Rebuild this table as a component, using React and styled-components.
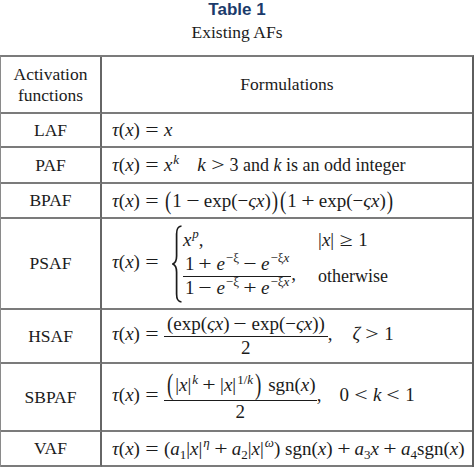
import React from "react";
import styled, { createGlobalStyle } from "styled-components";

const GlobalStyle = createGlobalStyle`
  html, body {
    margin: 0;
    padding: 0;
    background: #fff;
  }
  body {
    font-family: "Liberation Serif", "Times New Roman", serif;
    color: #1b1b1b;
  }
`;

const Page = styled.div`
  width: 474px;
  height: 468px;
  overflow: hidden;
`;

const Caption = styled.header`
  display: flex;
  flex-direction: column;
  align-items: center;
  height: 55px;
`;

const Title = styled.h1`
  margin: 0;
  font-family: "Liberation Sans", Arial, sans-serif;
  font-weight: 700;
  font-size: 17px;
  line-height: 20px;
  color: #1b3b6b;
`;

const Subtitle = styled.div`
  margin-top: 2px;
  font-size: 17.5px;
  line-height: 20px;
`;

const Grid = styled.div`
  display: grid;
  grid-template-columns: 101px 1fr;
  grid-template-rows: 57px 34px 36px 35px 91px 54px 68px 35px;
  border-top: 2px solid #7b7b7b;
  border-left: 1px solid #8a8a8a;
  border-right: 2px solid #5e5e5e;
`;

const Cell = styled.div`
  box-sizing: border-box;
  border-bottom: 2px solid #7b7b7b;
  display: flex;
  align-items: center;
  font-size: 17.5px;
  line-height: 20.5px;
  white-space: nowrap;
`;

const LabelCell = styled(Cell)`
  justify-content: center;
  text-align: center;
  border-right: 2px solid #666;
`;

const FormulaCell = styled(Cell)`
  justify-content: ${(p) => (p.$center ? "center" : "flex-start")};
  padding-left: ${(p) => (p.$center ? 0 : 10)}px;
`;

const Formula = styled.span`
  font-size: 19px;
  line-height: 20px;
  white-space: nowrap;
`;

const Words = styled.span`
  font-size: 18px;
`;

const V = styled.i`
  font-style: italic;
`;

const Op = styled.span`
  display: inline-block;
  width: 14px;
  text-align: center;
  transform: scaleX(1.25);
  margin: 0 ${(p) => p.$m ?? 4}px;
`;

const Sup = styled.span`
  font-size: 13px;
  vertical-align: 0.55em;
  line-height: 0;
  margin-left: ${(p) => p.$ml ?? 1}px;
`;

const Sub = styled.span`
  font-size: 13px;
  vertical-align: -0.3em;
  line-height: 0;
`;

const Big = styled.span`
  display: inline-block;
  transform: scaleY(${(p) => p.$s || 1.3});
  line-height: 0;
  margin: 0 ${(p) => p.$m ?? 1}px;
`;

const Quad = styled.span`
  display: inline-block;
  width: ${(p) => p.$w || 18}px;
`;

const Frac = styled.span`
  display: inline-flex;
  flex-direction: column;
  align-items: center;
  vertical-align: middle;
  margin: 0 ${(p) => p.$m ?? 0}px;
`;

const Num = styled.span`
  padding: 0 ${(p) => p.$px ?? 1}px 2px;
  line-height: ${(p) => p.$lh || 20}px;
`;

const Den = styled.span`
  align-self: stretch;
  text-align: center;
  border-top: 1.3px solid #1b1b1b;
  padding: 1px 2px 0;
  line-height: 20px;
`;

const Cases = styled.span`
  display: inline-grid;
  grid-template-columns: auto auto;
  column-gap: 22px;
  row-gap: 4px;
  align-items: center;
  vertical-align: middle;
`;

const BraceSvg = styled.svg`
  vertical-align: middle;
  margin: 0 1px 0 8px;
`;

const Brace = () => (
  <BraceSvg width="10" height="78" viewBox="0 0 10 78">
    <path
      d="M9.5,1 C5.5,1.5 4.6,4 4.6,9 L4.6,31 C4.6,36 3.2,38 0.8,39 C3.2,40 4.6,42 4.6,47 L4.6,69 C4.6,74 5.5,76.5 9.5,77"
      fill="none"
      stroke="#1b1b1b"
      strokeWidth="1.7"
    />
  </BraceSvg>
);

const Rel = ({ children }) => <Op $m={5}>{children}</Op>;
const Bin = ({ children }) => <Op $m={4}>{children}</Op>;

const Lhs = () => (
  <>
    <V>τ</V>(<V>x</V>)<Rel>=</Rel>
  </>
);

const rows = [
  {
    label: "LAF",
    formula: (
      <Formula>
        <Lhs />
        <V>x</V>
      </Formula>
    ),
  },
  {
    label: "PAF",
    formula: (
      <Formula>
        <Lhs />
        <V>x</V>
        <Sup>
          <V>k</V>
        </Sup>
        <Quad $w={18} />
        <V>k</V>
        <Rel>&gt;</Rel>
        <Words>
          3 and <V>k</V> is an odd integer
        </Words>
      </Formula>
    ),
  },
  {
    label: "BPAF",
    formula: (
      <Formula>
        <Lhs />
        <Big>(</Big>1<Bin>−</Bin>exp(−<V>ςx</V>)<Big>)</Big>
        <Big>(</Big>1<Bin>+</Bin>exp(−<V>ςx</V>)<Big>)</Big>
      </Formula>
    ),
  },
  {
    label: "PSAF",
    formula: (
      <Formula>
        <Lhs />
        <Brace />
        <Cases>
          <span>
            <V>x</V>
            <Sup>
              <V>p</V>
            </Sup>
            ,
          </span>
          <span>
            |<V>x</V>|<Rel>≥</Rel>1
          </span>
          <span>
            <Frac>
              <Num $px={2}>
                1<Bin>+</Bin>
                <V>e</V>
                <Sup>−ξ</Sup>
                <Bin>−</Bin>
                <V>e</V>
                <Sup>
                  −ξ<V>x</V>
                </Sup>
              </Num>
              <Den>
                1<Bin>−</Bin>
                <V>e</V>
                <Sup>−ξ</Sup>
                <Bin>+</Bin>
                <V>e</V>
                <Sup>
                  −ξ<V>x</V>
                </Sup>
              </Den>
            </Frac>
            ,
          </span>
          <Words>otherwise</Words>
        </Cases>
      </Formula>
    ),
  },
  {
    label: "HSAF",
    formula: (
      <Formula>
        <Lhs />
        <Frac>
          <Num $px={3}>
            (exp(<V>ςx</V>)<Bin>−</Bin>exp(−<V>ςx</V>))
          </Num>
          <Den>2</Den>
        </Frac>
        ,<Quad $w={20} />
        <V>ζ</V>
        <Rel>&gt;</Rel>1
      </Formula>
    ),
  },
  {
    label: "SBPAF",
    formula: (
      <Formula>
        <Lhs />
        <Frac>
          <Num $lh={26}>
            <Big $s={1.5} $m={2}>
              (
            </Big>
            |<V>x</V>|
            <Sup>
              <V>k</V>
            </Sup>
            <Bin>+</Bin>|<V>x</V>|
            <Sup>
              1/<V>k</V>
            </Sup>
            <Big $s={1.5} $m={2}>
              )
            </Big>{" "}
            sgn(<V>x</V>)
          </Num>
          <Den>2</Den>
        </Frac>
        ,<Quad $w={18} />0<Rel>&lt;</Rel>
        <V>k</V>
        <Rel>&lt;</Rel>1
      </Formula>
    ),
  },
  {
    label: "VAF",
    formula: (
      <Formula>
        <Lhs />(<V>a</V>
        <Sub>1</Sub>|<V>x</V>|
        <Sup>
          <V>η</V>
        </Sup>
        <Bin>+</Bin>
        <V>a</V>
        <Sub>2</Sub>|<V>x</V>|
        <Sup>
          <V>ω</V>
        </Sup>
        ) sgn(<V>x</V>)<Bin>+</Bin>
        <V>a</V>
        <Sub>3</Sub>
        <V>x</V>
        <Bin>+</Bin>
        <V>a</V>
        <Sub>4</Sub>sgn(<V>x</V>)
      </Formula>
    ),
  },
];

export default function App() {
  return (
    <Page>
      <GlobalStyle />
      <Caption>
        <Title>Table 1</Title>
        <Subtitle>Existing AFs</Subtitle>
      </Caption>
      <Grid>
        <LabelCell>
          Activation
          <br />
          functions
        </LabelCell>
        <FormulaCell $center>Formulations</FormulaCell>
        {rows.map((r) => (
          <React.Fragment key={r.label}>
            <LabelCell>{r.label}</LabelCell>
            <FormulaCell>{r.formula}</FormulaCell>
          </React.Fragment>
        ))}
      </Grid>
    </Page>
  );
}
